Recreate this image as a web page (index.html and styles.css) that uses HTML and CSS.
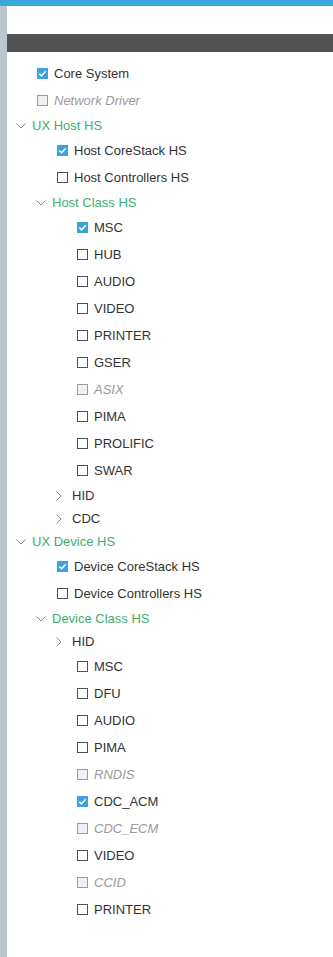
FILE: index.html
```html
<!DOCTYPE html>
<html>
<head>
    <link rel="stylesheet" href="styles.css">
</head>
<body>
    <div class="topbar"></div>
    <div class="main">
        <div class="sidebar"></div>
        <div class="content">
            <div class="toolbar"></div>

            <div class="tree">
                <div class="row"><span class="box on"><svg viewBox="0 0 11 11"><path d="M2.3 5.6 L4.5 7.8 L8.7 3.2"/></svg></span><span class="label">Core System</span></div>
                <div class="row disabled"><span class="box"></span><span class="label">Network Driver</span></div>

                <!-- Host -->
                <div class="node"><span class="arrow"><svg class="down" viewBox="0 0 10 6"><path d="M0.5 0.5 L5 5 L9.5 0.5"/></svg></span><span class="title">UX Host HS</span></div>
                <div class="children">
                    <div class="row"><span class="box on"><svg viewBox="0 0 11 11"><path d="M2.3 5.6 L4.5 7.8 L8.7 3.2"/></svg></span><span class="label">Host CoreStack HS</span></div>
                    <div class="row"><span class="box"></span><span class="label">Host Controllers HS</span></div>
                    <div class="node"><span class="arrow"><svg class="down" viewBox="0 0 10 6"><path d="M0.5 0.5 L5 5 L9.5 0.5"/></svg></span><span class="title">Host Class HS</span></div>
                    <div class="children">
                        <div class="row"><span class="box on"><svg viewBox="0 0 11 11"><path d="M2.3 5.6 L4.5 7.8 L8.7 3.2"/></svg></span><span class="label">MSC</span></div>
                        <div class="row"><span class="box"></span><span class="label">HUB</span></div>
                        <div class="row"><span class="box"></span><span class="label">AUDIO</span></div>
                        <div class="row"><span class="box"></span><span class="label">VIDEO</span></div>
                        <div class="row"><span class="box"></span><span class="label">PRINTER</span></div>
                        <div class="row"><span class="box"></span><span class="label">GSER</span></div>
                        <div class="row disabled"><span class="box"></span><span class="label">ASIX</span></div>
                        <div class="row"><span class="box"></span><span class="label">PIMA</span></div>
                        <div class="row"><span class="box"></span><span class="label">PROLIFIC</span></div>
                        <div class="row"><span class="box"></span><span class="label">SWAR</span></div>
                        <div class="node closed"><span class="arrow"><svg class="right" viewBox="0 0 6 10"><path d="M0.5 0.5 L5 5 L0.5 9.5"/></svg></span><span class="title">HID</span></div>
                        <div class="node closed"><span class="arrow"><svg class="right" viewBox="0 0 6 10"><path d="M0.5 0.5 L5 5 L0.5 9.5"/></svg></span><span class="title">CDC</span></div>
                    </div>
                </div>

                <!-- Device -->
                <div class="node"><span class="arrow"><svg class="down" viewBox="0 0 10 6"><path d="M0.5 0.5 L5 5 L9.5 0.5"/></svg></span><span class="title">UX Device HS</span></div>
                <div class="children">
                    <div class="row"><span class="box on"><svg viewBox="0 0 11 11"><path d="M2.3 5.6 L4.5 7.8 L8.7 3.2"/></svg></span><span class="label">Device CoreStack HS</span></div>
                    <div class="row"><span class="box"></span><span class="label">Device Controllers HS</span></div>
                    <div class="node"><span class="arrow"><svg class="down" viewBox="0 0 10 6"><path d="M0.5 0.5 L5 5 L9.5 0.5"/></svg></span><span class="title">Device Class HS</span></div>
                    <div class="children">
                        <div class="node closed"><span class="arrow"><svg class="right" viewBox="0 0 6 10"><path d="M0.5 0.5 L5 5 L0.5 9.5"/></svg></span><span class="title">HID</span></div>
                        <div class="row"><span class="box"></span><span class="label">MSC</span></div>
                        <div class="row"><span class="box"></span><span class="label">DFU</span></div>
                        <div class="row"><span class="box"></span><span class="label">AUDIO</span></div>
                        <div class="row"><span class="box"></span><span class="label">PIMA</span></div>
                        <div class="row disabled"><span class="box"></span><span class="label">RNDIS</span></div>
                        <div class="row"><span class="box on"><svg viewBox="0 0 11 11"><path d="M2.3 5.6 L4.5 7.8 L8.7 3.2"/></svg></span><span class="label">CDC_ACM</span></div>
                        <div class="row disabled"><span class="box"></span><span class="label">CDC_ECM</span></div>
                        <div class="row"><span class="box"></span><span class="label">VIDEO</span></div>
                        <div class="row disabled"><span class="box"></span><span class="label">CCID</span></div>
                        <div class="row"><span class="box"></span><span class="label">PRINTER</span></div>
                    </div>
                </div>
            </div>
        </div>
    </div>
</body>
</html>
```

FILE: styles.css
```css
html, body {
    margin: 0;
    padding: 0;
    height: 100%;
}

body {
    font-family: "Liberation Sans", Arial, sans-serif;
    font-size: 13px;
    color: #333;
    background: #fff;
    display: flex;
    flex-direction: column;
}

.topbar {
    height: 6px;
    background: #38a8db;
}

.main {
    flex: 1;
    display: flex;
}

.sidebar {
    width: 7px;
    background: #bac7ce;
}

.content {
    flex: 1;
    padding-top: 28px;
}

.toolbar {
    height: 18px;
    background: #525453;
}

.tree {
    padding: 8px 0 0 9px;
}

.children {
    padding-left: 20px;
}

/* checkbox rows */
.row {
    height: 27px;
    display: flex;
    align-items: center;
    padding-left: 21px;
}

.box {
    box-sizing: border-box;
    width: 11px;
    height: 11px;
    border: 1px solid #505050;
    background: #fff;
    margin-right: 6px;
    flex-shrink: 0;
    display: flex;
}

.box.on {
    background: #3ba2dd;
    border-color: #3ba2dd;
}

.box svg {
    width: 11px;
    height: 11px;
    margin: -1px;
}

.box svg path {
    fill: none;
    stroke: #fff;
    stroke-width: 1.5;
}

.row.disabled .box {
    background: #eef0f2;
    border-color: #9c9c9c;
}

.row.disabled .label {
    color: #9a9a9a;
    font-style: italic;
}

/* tree headers */
.node {
    height: 23px;
    display: flex;
    align-items: center;
}

.arrow {
    width: 16px;
    display: flex;
    align-items: center;
}

.arrow svg path {
    fill: none;
    stroke: #8a8a8a;
    stroke-width: 1;
}

.arrow .down {
    width: 10px;
    height: 6px;
}

.arrow .right {
    width: 6px;
    height: 10px;
}

.title {
    color: #3fae6c;
}

.node.closed .title {
    color: #333;
}
```
